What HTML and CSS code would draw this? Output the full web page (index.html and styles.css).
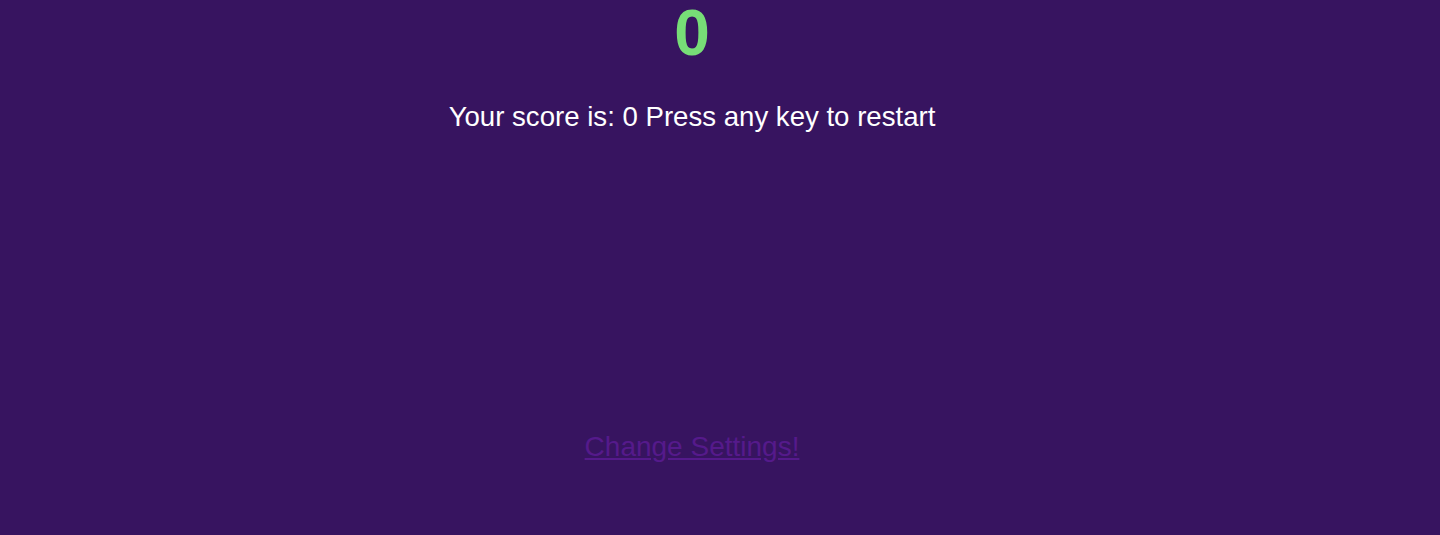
FILE: index.html
```html
<!DOCTYPE html>
<html>
<head>
<meta charset="utf-8">
<link rel="stylesheet" href="styles.css">
</head>
<body>
<div class="game">
  <div class="counter">0</div>
  <div class="message">Your score is: 0 Press any key to restart</div>
  <div class="spacer"></div>
  <a class="settings" href="#">Change Settings!</a>
</div>
</body>
</html>
```
FILE: styles.css
```css
html, body {
  margin: 0;
  padding: 0;
  background: #371460;
  height: 100%;
}
body {
  font-family: "Liberation Sans", Arial, sans-serif;
  color: #ffffff;
}
.game {
  width: 1368px;
  margin-left: 8px;
  display: flex;
  flex-direction: column;
  align-items: center;
  text-align: center;
}
.counter {
  font-size: 64px;
  font-weight: bold;
  color: #77dd77;
  line-height: 66px;
}
.message {
  margin-top: 35px;
  font-size: 27.6px;
  line-height: 32px;
}
.spacer {
  height: 298px;
}
.settings {
  font-size: 28px;
  line-height: 32px;
  color: #551a8b;
}
```
